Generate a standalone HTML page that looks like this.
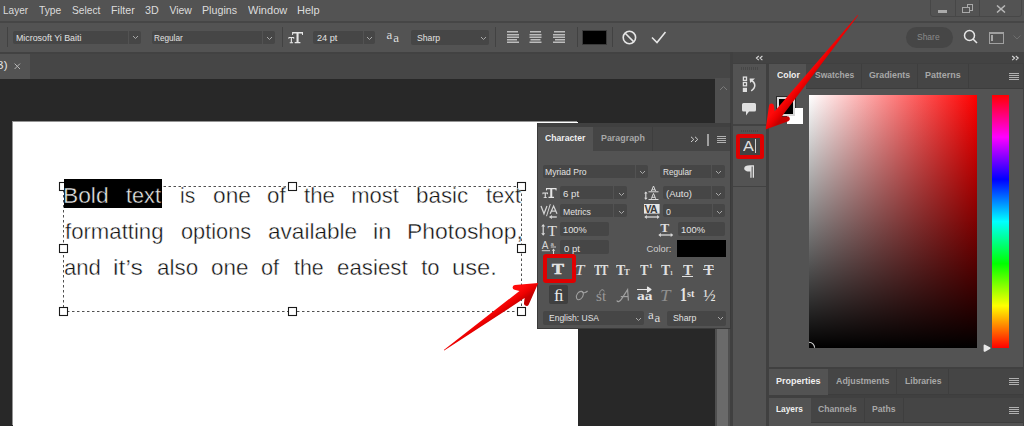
<!DOCTYPE html>
<html><head><meta charset="utf-8">
<style>
*{margin:0;padding:0;box-sizing:border-box}
html,body{width:1024px;height:426px;overflow:hidden;background:#282828;font-family:"Liberation Sans",sans-serif}
.a{position:absolute}
.t{position:absolute;line-height:1;white-space:nowrap}
.menu{font-size:10.4px;color:#dcdcdc}
.fld{position:absolute;background:#464646;border-radius:2px}
.fld .sep{position:absolute;top:0;bottom:0;width:1px;background:#525252}
.ft{position:absolute;line-height:1;white-space:nowrap;font-size:9.3px;color:#e2e2e2}
.chev{position:absolute}
.tab{position:absolute;font-weight:bold;font-size:8.7px;line-height:1;white-space:nowrap}
.cw{font-size:22px;-webkit-text-stroke:0.4px #fff;paint-order:normal}
.cwb{-webkit-text-stroke:0.4px #000}
.ic{position:absolute;line-height:1;white-space:nowrap;font-family:"Liberation Serif",serif;color:#e0e0e0}
.hb{position:absolute;width:10px;height:7px;background:repeating-linear-gradient(#b0b0b0 0 1px,transparent 1px 2px)}
</style></head><body>

<!-- menu bar -->
<div class="a" style="left:0;top:0;width:1024px;height:21px;background:#535353"></div>
<div class="a" style="left:0;top:21px;width:1024px;height:2px;background:#464646"></div>

<span class="t menu" style="left:2.97px;top:6.40px;transform:scaleX(0.964);transform-origin:0 0">Layer</span>
<span class="t menu" style="left:39.24px;top:6.40px;transform:scaleX(0.983);transform-origin:0 0">Type</span>
<span class="t menu" style="left:72.18px;top:6.40px;transform:scaleX(0.982);transform-origin:0 0">Select</span>
<span class="t menu" style="left:110.66px;top:6.40px;transform:scaleX(1.029);transform-origin:0 0">Filter</span>
<span class="t menu" style="left:144.66px;top:6.40px;transform:scaleX(1.031);transform-origin:0 0">3D</span>
<span class="t menu" style="left:169.40px;top:6.40px">View</span>
<span class="t menu" style="left:202.16px;top:6.40px;transform:scaleX(1.028);transform-origin:0 0">Plugins</span>
<span class="t menu" style="left:247.50px;top:6.40px;transform:scaleX(1.062);transform-origin:0 0">Window</span>
<span class="t menu" style="left:297.14px;top:6.40px;transform:scaleX(1.062);transform-origin:0 0">Help</span>

<!-- window controls -->
<div class="a" style="left:930px;top:-2px;width:92px;height:19px;border:1px solid #474747;border-radius:0 0 3px 3px"></div>
<div class="a" style="left:955px;top:0;width:1px;height:16px;background:#474747"></div>
<div class="a" style="left:979px;top:0;width:1px;height:16px;background:#474747"></div>
<div class="a" style="left:938px;top:9.5px;width:9px;height:3px;background:#ababab"></div>
<div class="a" style="left:966.5px;top:4px;width:6.5px;height:6.5px;border:1.6px solid #a8a8a8"></div>
<div class="a" style="left:962px;top:7px;width:7.5px;height:6px;border:1.6px solid #a8a8a8;background:#535353"></div>
<svg class="a" style="left:996px;top:5px" width="10" height="8"><path d="M1 0.5L9 7.5M9 0.5L1 7.5" stroke="#b8b8b8" stroke-width="1.5"/></svg>

<!-- options bar -->
<div class="a" style="left:0;top:23px;width:1024px;height:29px;background:#535353"></div>
<div class="a" style="left:0;top:52px;width:1024px;height:2px;background:#424242"></div>
<div class="a" style="left:7px;top:27px;width:1px;height:20px;background:#424242"></div>

<div class="fld" style="left:13px;top:31px;width:128px;height:13px"><div class="sep" style="left:115px"></div></div>
<span class="ft" style="left:16.31px;top:34.00px;transform:scaleX(0.951);transform-origin:0 0">Microsoft Yi Baiti</span>
<svg class="chev" style="left:131.50px;top:35.00px" width="7" height="5"><path d="M1 1L3.5 3.5L6 1" fill="none" stroke="#a8a8a8" stroke-width="1"/></svg>

<div class="fld" style="left:152px;top:31px;width:123px;height:13px"><div class="sep" style="left:110px"></div></div>
<span class="ft" style="left:153.76px;top:33.60px;transform:scaleX(0.881);transform-origin:0 0">Regular</span>
<svg class="chev" style="left:266.25px;top:35.90px" width="7" height="5"><path d="M1 1L3.5 3.5L6 1" fill="none" stroke="#a8a8a8" stroke-width="1"/></svg>

<div class="a" style="left:282px;top:27px;width:1px;height:20px;background:#424242"></div>
<svg class="a" style="left:288px;top:31px" width="16" height="13"><g fill="#e6e6e6">
<path d="M0.5 6.1H6.2V8H5.6L5.3 7.1H3.9V11.3H5V12.3H1.7V11.3H2.8V7.1H1.4L1.1 8H0.5Z"/>
<path d="M4.1 1H15V3.9H14.2L13.8 2.5H10.6V10.9H12.4V12.3H6.7V10.9H8.5V2.5H5.3L4.9 3.9H4.1Z"/>
</g></svg>

<div class="fld" style="left:313px;top:31px;width:62px;height:13px"><div class="sep" style="left:50px"></div></div>
<span class="ft" style="left:316.57px;top:33.60px;transform:scaleX(0.986);transform-origin:0 0">24 pt</span>
<svg class="chev" style="left:365.90px;top:36.00px" width="7" height="5"><path d="M1 1L3.5 3.5L6 1" fill="none" stroke="#a8a8a8" stroke-width="1"/></svg>

<svg class="a" style="left:382px;top:28px" width="22" height="18"><text x="4.6" y="11.4" font-family="Liberation Serif" font-size="13" fill="#dcdcdc" transform="scale(1,1)">a</text><text x="11.2" y="13.9" font-family="Liberation Serif" font-size="13" fill="#dcdcdc">a</text></svg>

<div class="fld" style="left:411px;top:30px;width:78px;height:15px"></div>
<span class="ft" style="left:417.23px;top:34.00px;transform:scaleX(0.932);transform-origin:0 0">Sharp</span>
<svg class="chev" style="left:480.25px;top:36.00px" width="7" height="5"><path d="M1 1L3.5 3.5L6 1" fill="none" stroke="#a8a8a8" stroke-width="1"/></svg>

<div class="a" style="left:495px;top:27px;width:1px;height:20px;background:#424242"></div>
<svg class="a" style="left:506px;top:30px" width="62" height="15">
 <g fill="#bdbdbd">
 <rect x="1" y="1" width="11" height="1.5"/><rect x="1" y="4" width="12" height="1.5"/><rect x="1" y="6.5" width="12" height="1.5"/><rect x="1" y="9" width="10" height="1.5"/><rect x="1" y="11.5" width="12" height="1.5"/>
 <rect x="24" y="1" width="11" height="1.5"/><rect x="23.5" y="4" width="12" height="1.5"/><rect x="23.5" y="6.5" width="12" height="1.5"/><rect x="24.5" y="9" width="10" height="1.5"/><rect x="23.5" y="11.5" width="12" height="1.5"/>
 <rect x="48" y="1" width="11" height="1.5"/><rect x="47" y="4" width="12" height="1.5"/><rect x="47" y="6.5" width="12" height="1.5"/><rect x="49" y="9" width="10" height="1.5"/><rect x="47" y="11.5" width="12" height="1.5"/>
 </g>
</svg>
<div class="a" style="left:577px;top:27px;width:1px;height:20px;background:#424242"></div>
<div class="a" style="left:582px;top:30px;width:25px;height:15px;background:#000;border:1px solid #3a3a3a"></div>
<div class="a" style="left:612px;top:27px;width:1px;height:20px;background:#424242"></div>
<svg class="a" style="left:621px;top:29px" width="17" height="17"><circle cx="8.4" cy="8.5" r="6.2" fill="none" stroke="#e6e6e6" stroke-width="1.6"/><path d="M4.2 4.2L12.6 12.6" stroke="#e6e6e6" stroke-width="1.6"/></svg>
<svg class="a" style="left:650px;top:30px" width="18" height="15"><path d="M2 7.5L7 12.5L15.5 2" fill="none" stroke="#e6e6e6" stroke-width="1.6"/></svg>

<div class="a" style="left:906px;top:27px;width:47px;height:21px;background:#464646;border-radius:11px"></div>
<span class="t" style="left:917.24px;top:33.25px;transform:scaleX(0.911);transform-origin:0 0;font-size:9.3px;color:#8a8a8a">Share</span>
<svg class="a" style="left:962px;top:28px" width="17" height="17"><circle cx="7.5" cy="7.5" r="5" fill="none" stroke="#e6e6e6" stroke-width="1.5"/><path d="M11 11L15 15" stroke="#e6e6e6" stroke-width="1.6"/></svg>
<div class="a" style="left:989px;top:32px;width:15px;height:12px;border:1.4px solid #a0a0a0;border-top-width:2px"></div>
<div class="a" style="left:991px;top:35px;width:2px;height:6px;background:#a8a8a8"></div>
<svg class="a" style="left:1013px;top:35px" width="8" height="5"><path d="M0.5 0.5L4 4L7.5 0.5" fill="none" stroke="#6e6e6e" stroke-width="1"/></svg>

<!-- tab bar -->
<div class="a" style="left:0;top:54px;width:730px;height:25px;background:#464646"></div>
<div class="a" style="left:0;top:54px;width:30px;height:25px;background:#535353"></div>
<span class="t" style="left:-3.90px;top:60.90px;transform:scaleX(1.105);transform-origin:0 0;font-size:10.4px;color:#e6e6e6">B)</span>
<svg class="a" style="left:14.2px;top:62.8px" width="7" height="7"><path d="M0.6 0.6L6 6M6 0.6L0.6 6" stroke="#b8b8b8" stroke-width="1"/></svg>

<!-- canvas -->
<div class="a" style="left:13px;top:122px;width:565px;height:304px;background:#fff;box-shadow:-1px -1px 0 0 rgba(255,255,255,0.5)"></div>

<!-- box + arrows -->
<svg class="a" style="left:0;top:0" width="1024" height="426">
<rect x="63.5" y="186.5" width="458" height="125" fill="none" stroke="#505050" stroke-width="1" stroke-dasharray="2.5 2.5"/>
<rect x="59.5" y="182.5" width="8" height="8" fill="#fff" stroke="#1a1a1a" stroke-width="1.1"/>
<rect x="288.5" y="182.5" width="8" height="8" fill="#fff" stroke="#1a1a1a" stroke-width="1.1"/>
<rect x="517.5" y="182.5" width="8" height="8" fill="#fff" stroke="#1a1a1a" stroke-width="1.1"/>
<rect x="59.5" y="244.5" width="8" height="8" fill="#fff" stroke="#1a1a1a" stroke-width="1.1"/>
<rect x="517.5" y="244.5" width="8" height="8" fill="#fff" stroke="#1a1a1a" stroke-width="1.1"/>
<rect x="59.5" y="307.5" width="8" height="8" fill="#fff" stroke="#1a1a1a" stroke-width="1.1"/>
<rect x="288.5" y="307.5" width="8" height="8" fill="#fff" stroke="#1a1a1a" stroke-width="1.1"/>
<rect x="517.5" y="307.5" width="8" height="8" fill="#fff" stroke="#1a1a1a" stroke-width="1.1"/>
</svg>
<!-- canvas text -->
<div class="a" style="left:64px;top:179px;width:98px;height:29px;background:#000"></div>
<span class="t cw cwb" style="left:63.22px;top:184.95px;transform:scaleX(1.035);transform-origin:0 0;color:#e8e8e8">Bold</span>
<span class="t cw cwb" style="left:126.00px;top:184.95px;transform:scaleX(0.985);transform-origin:0 0;color:#e8e8e8">text</span>
<span class="t cw" style="left:180.43px;top:184.95px;transform:scaleX(0.958);transform-origin:0 0;color:#111">is</span>
<span class="t cw" style="left:213.04px;top:184.95px;transform:scaleX(1.032);transform-origin:0 0;color:#111">one</span>
<span class="t cw" style="left:267.30px;top:184.95px;transform:scaleX(1.015);transform-origin:0 0;color:#111">of</span>
<span class="t cw" style="left:303.75px;top:184.95px;transform:scaleX(1.010);transform-origin:0 0;color:#111">the</span>
<span class="t cw" style="left:351.13px;top:184.95px;color:#111">most</span>
<span class="t cw" style="left:416.10px;top:184.95px;transform:scaleX(1.017);transform-origin:0 0;color:#111">basic</span>
<span class="t cw" style="left:486.25px;top:184.95px;transform:scaleX(0.985);transform-origin:0 0;color:#111">text</span>
<span class="t cw" style="left:64.75px;top:220.70px;transform:scaleX(1.007);transform-origin:0 0;color:#111">formatting</span>
<span class="t cw" style="left:180.57px;top:220.70px;transform:scaleX(0.988);transform-origin:0 0;color:#111">options</span>
<span class="t cw" style="left:268.04px;top:220.70px;transform:scaleX(1.026);transform-origin:0 0;color:#111">available</span>
<span class="t cw" style="left:373.03px;top:220.70px;transform:scaleX(1.068);transform-origin:0 0;color:#111">in</span>
<span class="t cw" style="left:406.96px;top:220.70px;transform:scaleX(1.042);transform-origin:0 0;color:#111">Photoshop,</span>
<span class="t cw" style="left:64.31px;top:257.45px;transform:scaleX(1.006);transform-origin:0 0;color:#111">and</span>
<span class="t cw" style="left:113.45px;top:257.45px;transform:scaleX(1.126);transform-origin:0 0;color:#111">it’s</span>
<span class="t cw" style="left:156.80px;top:257.45px;transform:scaleX(1.019);transform-origin:0 0;color:#111">also</span>
<span class="t cw" style="left:210.55px;top:257.45px;transform:scaleX(1.018);transform-origin:0 0;color:#111">one</span>
<span class="t cw" style="left:261.32px;top:257.45px;transform:scaleX(0.987);transform-origin:0 0;color:#111">of</span>
<span class="t cw" style="left:293.75px;top:257.45px;transform:scaleX(0.968);transform-origin:0 0;color:#111">the</span>
<span class="t cw" style="left:336.80px;top:257.45px;transform:scaleX(1.013);transform-origin:0 0;color:#111">easiest</span>
<span class="t cw" style="left:421.25px;top:257.45px;color:#111">to</span>
<span class="t cw" style="left:452.27px;top:257.45px;transform:scaleX(1.079);transform-origin:0 0;color:#111">use.</span>
<!-- scrollbar -->
<div class="a" style="left:715px;top:78px;width:15px;height:348px;background:#4f4f4f"></div>
<svg class="a" style="left:719px;top:85px" width="9" height="6"><path d="M1 5L4.5 1.5L8 5" fill="none" stroke="#7a7a7a" stroke-width="1"/></svg>
<div class="a" style="left:717px;top:300px;width:11px;height:126px;background:#6a6a6a"></div>

<!-- dock -->
<div class="a" style="left:730px;top:52px;width:294px;height:374px;background:#404040"></div>
<div class="a" style="left:733px;top:52px;width:291px;height:11px;background:#434343"></div>
<svg class="a" style="left:754.5px;top:55px" width="9" height="6"><path d="M3.8 1L1.4 3.1L3.8 5.2M7.4 1L5 3.1L7.4 5.2" fill="none" stroke="#d8d8d8" stroke-width="1.1"/></svg>
<svg class="a" style="left:1011px;top:55px" width="9" height="6"><path d="M1.2 1L3.6 3.1L1.2 5.2M4.8 1L7.2 3.1L4.8 5.2" fill="none" stroke="#d8d8d8" stroke-width="1.1"/></svg>

<!-- icon column -->
<div class="a" style="left:733px;top:64px;width:33px;height:362px;background:#535353"></div>
<div class="a" style="left:733px;top:124px;width:33px;height:2px;background:#424242"></div>
<div class="a" style="left:733px;top:186px;width:33px;height:1px;background:#424242"></div>
<div class="a" style="left:741px;top:67px;width:17px;height:3px;background:repeating-linear-gradient(90deg,#474747 0 1px,transparent 1px 2px)"></div>
<div class="a" style="left:741px;top:130px;width:17px;height:2px;background:repeating-linear-gradient(90deg,#474747 0 1px,transparent 1px 2px)"></div>
<svg class="a" style="left:741px;top:75px" width="17" height="18">
 <rect x="2.4" y="2.1" width="3.1" height="3.3" fill="none" stroke="#e0e0e0" stroke-width="1.3"/>
 <rect x="2.4" y="7.5" width="3.1" height="3.3" fill="none" stroke="#e0e0e0" stroke-width="1.3"/>
 <rect x="1.8" y="12.8" width="4.2" height="4.2" fill="#e0e0e0"/>
 <path d="M10 5.2C14.6 7.2 15.4 12.4 10.2 15.8" fill="none" stroke="#e0e0e0" stroke-width="1.5"/>
 <path d="M8.6 3.4L14 3.5L9.1 8Z" fill="#e0e0e0"/>
</svg>
<svg class="a" style="left:741px;top:102px" width="16" height="15"><path d="M2.5 1H13.5Q15 1 15 2.5V8Q15 9.5 13.5 9.5H8L5 13.5V9.5H2.5Q1 9.5 1 8V2.5Q1 1 2.5 1Z" fill="#e0e0e0"/></svg>

<!-- red box A| -->
<div class="a" style="left:735.5px;top:134px;width:28.5px;height:25px;border:4px solid #e00000;border-radius:2.5px;background:#424242"></div>
<span class="t" style="left:742.80px;top:139.10px;transform:scaleX(1.096);transform-origin:0 0;font-size:14.8px;color:#e0e0e0">A</span>
<div class="a" style="left:754.8px;top:138.5px;width:1px;height:14.5px;background:#d0d0d0"></div>
<svg class="a" style="left:744px;top:165px" width="11" height="14"><path d="M6 0.3H10V12.8H8.7V1.5H7.6V12.8H6.3V6.6C2.5 6.6 0.2 5.3 0.2 3.4C0.2 1.5 2.5 0.3 6 0.3Z" fill="#e0e0e0"/></svg>

<!-- color panel -->
<div class="a" style="left:769px;top:64px;width:254px;height:303px;background:#535353"></div>
<div class="a" style="left:806px;top:64px;width:217px;height:25px;background:#454545;border-bottom:1px solid #3d3d3d"></div>
<div class="a" style="left:861px;top:64px;width:1px;height:24px;background:#3e3e3e"></div>
<div class="a" style="left:917px;top:64px;width:1px;height:24px;background:#3e3e3e"></div>
<div class="a" style="left:968px;top:64px;width:1px;height:24px;background:#3e3e3e"></div>
<span class="tab" style="left:776.63px;top:70.75px;transform:scaleX(1.008);transform-origin:0 0;color:#f0f0f0">Color</span>
<span class="tab" style="left:814.62px;top:70.75px;transform:scaleX(0.977);transform-origin:0 0;color:#a8a8a8">Swatches</span>
<span class="tab" style="left:869.12px;top:70.75px;transform:scaleX(1.015);transform-origin:0 0;color:#a8a8a8">Gradients</span>
<span class="tab" style="left:925.44px;top:70.75px;transform:scaleX(1.025);transform-origin:0 0;color:#a8a8a8">Patterns</span>
<div class="hb" style="left:1009px;top:73px"></div>

<div class="a" style="left:809px;top:95px;width:168px;height:253px;background:linear-gradient(to bottom,rgba(0,0,0,0),#000),linear-gradient(to right,#fff,#f00)"></div>
<div class="a" style="left:992px;top:95px;width:17px;height:253px;background:linear-gradient(to bottom,#f00 0%,#f0f 16.67%,#00f 33.33%,#0ff 50%,#0f0 66.67%,#ff0 83.33%,#f00 100%)"></div>
<svg class="a" style="left:803px;top:341px" width="13" height="8"><path d="M6 1.2A5.6 5.6 0 0 1 11.6 6.8" fill="none" stroke="#d0d0d0" stroke-width="1.1"/></svg>
<svg class="a" style="left:983px;top:344px" width="9" height="8"><path d="M1.6 1.6L6.4 4.2L1.6 6.8Z" fill="#e8e8e8" stroke="#e8e8e8" stroke-linejoin="round" stroke-width="2"/></svg>
<div class="a" style="left:777px;top:97px;width:18px;height:19px;border:1px solid #eaeaea;outline:1px solid #2a2a2a;background:#000"></div>
<div class="a" style="left:787px;top:108px;width:16px;height:16px;background:#fff"></div>
<div class="a" style="left:777px;top:97px;width:18px;height:19px;border:2px solid #d8d8d8;background:#000"></div>

<!-- properties -->
<div class="a" style="left:769px;top:369px;width:254px;height:26px;background:#454545;border-bottom:1px solid #3d3d3d"></div>
<div class="a" style="left:769px;top:369px;width:59px;height:26px;background:#535353"></div>
<div class="a" style="left:896px;top:369px;width:1px;height:26px;background:#3e3e3e"></div>
<div class="a" style="left:948px;top:369px;width:1px;height:26px;background:#3e3e3e"></div>
<span class="tab" style="left:776.44px;top:376.75px;transform:scaleX(1.035);transform-origin:0 0;color:#f0f0f0">Properties</span>
<span class="tab" style="left:836.11px;top:376.50px;transform:scaleX(1.017);transform-origin:0 0;color:#a8a8a8">Adjustments</span>
<span class="tab" style="left:905.06px;top:376.50px;transform:scaleX(0.994);transform-origin:0 0;color:#a8a8a8">Libraries</span>
<div class="hb" style="left:1009px;top:378px"></div>

<!-- layers -->
<div class="a" style="left:769px;top:398px;width:254px;height:25px;background:#454545;border-bottom:1px solid #3d3d3d"></div>
<div class="a" style="left:769px;top:398px;width:42px;height:28px;background:#535353"></div>
<div class="a" style="left:864px;top:398px;width:1px;height:24px;background:#3e3e3e"></div>
<div class="a" style="left:903px;top:398px;width:1px;height:24px;background:#3e3e3e"></div>
<div class="a" style="left:769px;top:423px;width:254px;height:3px;background:#535353"></div>
<span class="tab" style="left:776.48px;top:405.00px;transform:scaleX(0.957);transform-origin:0 0;color:#f0f0f0">Layers</span>
<span class="tab" style="left:818.48px;top:405.00px;transform:scaleX(0.990);transform-origin:0 0;color:#a8a8a8">Channels</span>
<span class="tab" style="left:872.46px;top:404.90px;transform:scaleX(0.991);transform-origin:0 0;color:#a8a8a8">Paths</span>
<div class="hb" style="left:1009px;top:407px"></div>


<!-- character panel -->
<div class="a" style="left:537px;top:122.5px;width:194px;height:206.5px;background:#3a3a3a"></div>
<div class="a" style="left:538px;top:127px;width:192px;height:24px;background:#454545"></div>
<div class="a" style="left:538px;top:123px;width:192px;height:4px;background:#404040"></div>
<div class="a" style="left:538px;top:127px;width:55px;height:24px;background:#535353"></div>
<div class="a" style="left:652px;top:127px;width:1px;height:24px;background:#3e3e3e"></div>
<span class="tab" style="left:545.33px;top:133.60px;transform:scaleX(0.994);transform-origin:0 0;color:#f0f0f0">Character</span>
<span class="tab" style="left:601.44px;top:133.60px;transform:scaleX(1.022);transform-origin:0 0;color:#a8a8a8">Paragraph</span>
<svg class="a" style="left:689.5px;top:135.5px" width="11" height="8"><path d="M1 0.8L3.8 3.4L1 6M5 0.8L7.8 3.4L5 6" fill="none" stroke="#d0d0d0" stroke-width="1"/></svg>
<div class="a" style="left:707px;top:134px;width:1.5px;height:12px;background:#a0a0a0"></div>
<div class="hb" style="left:717px;top:136px;width:9px"></div>
<div class="a" style="left:538px;top:151px;width:192px;height:177px;background:#535353"></div>

<div class="fld" style="left:543px;top:165px;width:105px;height:13px"><div class="sep" style="left:92px"></div></div>
<span class="ft" style="left:544.93px;top:167.75px;transform:scaleX(0.926);transform-origin:0 0">Myriad Pro</span>
<svg class="chev" style="left:639.00px;top:170.00px" width="7" height="5"><path d="M1 1L3.5 3.5L6 1" fill="none" stroke="#a8a8a8" stroke-width="1"/></svg>
<div class="fld" style="left:660px;top:165px;width:65px;height:13px"><div class="sep" style="left:51px"></div></div>
<span class="ft" style="left:663.11px;top:167.75px;transform:scaleX(0.881);transform-origin:0 0">Regular</span>
<svg class="chev" style="left:715.25px;top:170.00px" width="7" height="5"><path d="M1 1L3.5 3.5L6 1" fill="none" stroke="#a8a8a8" stroke-width="1"/></svg>

<svg class="a" style="left:541.5px;top:187px" width="16" height="13"><g transform="scale(0.97,0.9)"><g fill="#e6e6e6"><path d="M0.5 6.1H6.2V8H5.6L5.3 7.1H3.9V11.3H5V12.3H1.7V11.3H2.8V7.1H1.4L1.1 8H0.5Z"/><path d="M4.1 1H15V3.9H14.2L13.8 2.5H10.6V10.9H12.4V12.3H6.7V10.9H8.5V2.5H5.3L4.9 3.9H4.1Z"/></g></g></svg>
<div class="fld" style="left:560px;top:186px;width:67px;height:13px"><div class="sep" style="left:53px"></div></div>
<span class="ft" style="left:562.55px;top:189.90px;transform:scaleX(1.042);transform-origin:0 0">6 pt</span>
<svg class="chev" style="left:617.50px;top:191.50px" width="7" height="5"><path d="M1 1L3.5 3.5L6 1" fill="none" stroke="#a8a8a8" stroke-width="1"/></svg>

<svg class="a" style="left:644px;top:185px" width="16" height="16"><g fill="none" stroke="#d8d8d8" stroke-width="1"><path d="M9.5 1L7.3 6.2M9.5 1L11.7 6.2M8 4.8H11M4.5 6.8H14.5"/><path d="M9.5 8.4L7.3 13.8M9.5 8.4L11.7 13.8M8 12.3H11M4.5 14.5H14.5"/></g><path d="M1.8 7.2V14.2" stroke="#d8d8d8" stroke-width="1.2"/><path d="M0 8.6L1.8 6.6L3.6 8.6ZM0 12.8L1.8 14.8L3.6 12.8Z" fill="#d8d8d8"/></svg>
<div class="fld" style="left:663px;top:186px;width:62px;height:13px"><div class="sep" style="left:48px"></div></div>
<span class="ft" style="left:665.80px;top:189.50px;transform:scaleX(1.024);transform-origin:0 0">(Auto)</span>
<svg class="chev" style="left:715.25px;top:191.50px" width="7" height="5"><path d="M1 1L3.5 3.5L6 1" fill="none" stroke="#a8a8a8" stroke-width="1"/></svg>

<svg class="a" style="left:538px;top:202px" width="22" height="18"><g fill="none" stroke="#d4d4d4" stroke-width="1.25"><path d="M3 4L6 11.7L9 4M12.2 11.7L15.6 4L19 11.7M13.3 9.2H17.9"/></g><path d="M12.3 2.2L8.5 14.2" stroke="#d4d4d4" stroke-width="1"/><path d="M13.5 15H18.8" stroke="#d4d4d4" stroke-width="1.4"/><path d="M10.8 15L13.9 13V17Z" fill="#d4d4d4"/></svg>
<div class="fld" style="left:560px;top:204px;width:67px;height:13px"><div class="sep" style="left:53px"></div></div>
<span class="ft" style="left:562.82px;top:207.75px;transform:scaleX(0.933);transform-origin:0 0">Metrics</span>
<svg class="chev" style="left:617.50px;top:209.75px" width="7" height="5"><path d="M1 1L3.5 3.5L6 1" fill="none" stroke="#a8a8a8" stroke-width="1"/></svg>

<svg class="a" style="left:643px;top:203px" width="18" height="17"><rect x="1" y="1" width="15.6" height="9.6" fill="#e6e6e6"/><text x="1.6" y="9.8" font-family="Liberation Sans" font-weight="bold" font-size="10.5" fill="#3a3a3a" letter-spacing="-0.9">VA</text><path d="M3 14H15" stroke="#d8d8d8" stroke-width="1.3"/><path d="M1.3 14L3.8 12V16ZM16.6 14L14.1 12V16Z" fill="#d8d8d8"/></svg>
<div class="fld" style="left:663px;top:204px;width:62px;height:13px"><div class="sep" style="left:49px"></div></div>
<span class="ft" style="left:665.98px;top:207.75px;transform:scaleX(0.946);transform-origin:0 0">0</span>
<svg class="chev" style="left:715.50px;top:209.75px" width="7" height="5"><path d="M1 1L3.5 3.5L6 1" fill="none" stroke="#a8a8a8" stroke-width="1"/></svg>

<svg class="a" style="left:540px;top:222px" width="18" height="16"><text x="7.6" y="13.8" font-family="Liberation Serif" font-size="15.5" fill="#e0e0e0" transform="translate(0,0)">T</text><path d="M3.2 3.5V12.2" stroke="#d8d8d8" stroke-width="1.2"/><path d="M1.2 4.4L3.2 1.9L5.2 4.4ZM1.2 11.3L3.2 13.8L5.2 11.3Z" fill="#d8d8d8"/></svg>
<div class="fld" style="left:560px;top:222px;width:49px;height:14px"></div>
<span class="ft" style="left:562.92px;top:225.75px;transform:scaleX(0.992);transform-origin:0 0">100%</span>

<svg class="a" style="left:657px;top:222px" width="18" height="16"><text x="3.2" y="10.4" font-family="Liberation Serif" font-weight="bold" font-size="13.5" fill="#e0e0e0">T</text><path d="M3.5 13H14" stroke="#d8d8d8" stroke-width="1.3"/><path d="M1.3 13L3.9 11V15ZM16.3 13L13.7 11V15Z" fill="#d8d8d8"/></svg>
<div class="fld" style="left:678px;top:222px;width:47px;height:14px"></div>
<span class="ft" style="left:680.66px;top:225.75px;transform:scaleX(1.008);transform-origin:0 0">100%</span>

<svg class="a" style="left:541px;top:240px" width="17" height="16"><text x="0.8" y="9.4" font-family="Liberation Sans" font-size="10" fill="#d8d8d8">A</text><text x="9.6" y="5.8" font-family="Liberation Sans" font-size="6" fill="#d8d8d8">a</text><path d="M0.8 10.7H9M9.8 7H15" fill="none" stroke="#d8d8d8" stroke-width="0.9"/><path d="M12.5 14.5V10.3" stroke="#d8d8d8" stroke-width="1.1"/><path d="M10.8 10.8L12.5 8.6L14.2 10.8Z" fill="#d8d8d8"/></svg>
<div class="fld" style="left:560px;top:240px;width:49px;height:14px"></div>
<span class="ft" style="left:564.10px;top:244.90px;transform:scaleX(1.023);transform-origin:0 0">0 pt</span>

<span class="ft" style="left:646.56px;top:244.90px;color:#cfcfcf">Color:</span>
<div class="a" style="left:677px;top:240px;width:49px;height:17px;background:#000"></div>

<!-- style buttons -->
<div class="a" style="left:543px;top:254px;width:33px;height:29px;border:4px solid #e00000;border-radius:3px;background:#505050"></div>
<span class="ic" style="left:552.42px;top:262.25px;transform:scaleX(1.264);transform-origin:0 0;font-size:14.2px;font-weight:bold;-webkit-text-stroke:0.5px #e8e8e8">T</span>
<span class="ic" style="left:574.69px;top:262.50px;transform:scaleX(1.165);transform-origin:0 0;font-size:14.5px;font-style:italic">T</span>
<span class="ic" style="left:593.62px;top:262.50px;transform:scaleX(0.807);transform-origin:0 0;font-size:14.5px;font-weight:bold;letter-spacing:-1.5px">TT</span>
<span class="ic" style="left:615.78px;top:262.50px;transform:scaleX(0.958);transform-origin:0 0;font-size:14.5px;font-weight:bold">T</span>
<span class="ic" style="left:624.06px;top:267.50px;transform:scaleX(0.971);transform-origin:0 0;font-size:9px;font-weight:bold">T</span>
<span class="ic" style="left:639.50px;top:262.70px;transform:scaleX(0.883);transform-origin:0 0;font-size:14.5px;font-weight:bold">T</span>
<span class="ic" style="left:648.74px;top:264.20px;transform:scaleX(1.309);transform-origin:0 0;font-size:5.5px;font-weight:bold">1</span>
<span class="ic" style="left:660.58px;top:262.70px;transform:scaleX(0.958);transform-origin:0 0;font-size:14.5px;font-weight:bold">T</span>
<span class="ic" style="left:670.04px;top:271.00px;transform:scaleX(1.067);transform-origin:0 0;font-size:5.5px;font-weight:bold">1</span>
<span class="ic" style="left:682.97px;top:262.70px;transform:scaleX(1.012);transform-origin:0 0;font-size:14.5px;font-weight:bold">T</span>
<div class="a" style="left:682px;top:276px;width:11px;height:1.2px;background:#e0e0e0"></div>
<span class="ic" style="left:703.58px;top:262.70px;transform:scaleX(0.990);transform-origin:0 0;font-size:14.5px;font-weight:bold">T</span>
<div class="a" style="left:703px;top:269px;width:10.5px;height:1.3px;background:#e0e0e0"></div>

<!-- ligature row -->
<div class="a" style="left:549px;top:285px;width:19px;height:19.4px;background:#3f3f3f;border-radius:2px"></div>
<span class="ic" style="left:553.53px;top:286.90px;transform:scaleX(1.019);transform-origin:0 0;font-size:17px;color:#eaeaea">&#64257;</span>
<svg class="a" style="left:574px;top:289px" width="16" height="13"><g fill="none" stroke="#a0a0a0" stroke-width="1.1"><path d="M2.6 9.2C1.6 5.6 4.8 1.9 7.6 2.4C10.3 2.9 9.8 7.6 6.8 9.9C4.6 11.5 3 10.8 2.6 9.2Z"/><path d="M7.8 2.6C9.4 4.4 11.6 4 13.6 2"/></g></svg>
<span class="ic" style="left:595.93px;top:288.50px;transform:scaleX(1.012);transform-origin:0 0;font-size:15px;color:#9a9a9a">st</span>
<svg class="a" style="left:596px;top:286px" width="12" height="10"><path d="M3.6 7.6C3.6 3.6 7.6 2.4 8.2 5.4" fill="none" stroke="#9a9a9a" stroke-width="1"/></svg>
<svg class="a" style="left:615px;top:288px" width="16" height="15"><g fill="none" stroke="#a0a0a0" stroke-width="1.15"><path d="M1.8 12.4C2.8 14.6 5 13.4 6.8 10.6L12.6 1.6L13.4 12.6"/><path d="M5.8 8.6H13"/></g></svg>
<span class="ic" style="left:636.52px;top:290.00px;transform:scaleX(1.290);transform-origin:0 0;font-size:12px;font-weight:bold;color:#e6e6e6">aa</span>
<svg class="a" style="left:636px;top:286px" width="17" height="7"><path d="M1 3.5H14.5M11.5 1L15 3.5L11.5 6Z" fill="#e6e6e6" stroke="#e6e6e6" stroke-width="1.1" stroke-linejoin="round"/></svg>
<span class="ic" style="left:660.42px;top:287.90px;transform:scaleX(1.142);transform-origin:0 0;font-size:16.5px;font-style:italic;color:#8e8e8e">T</span>
<span class="ic" style="left:679.92px;top:285.90px;transform:scaleX(0.770);transform-origin:0 0;font-size:18px;font-weight:bold;color:#e6e6e6">1</span>
<span class="ic" style="left:686.54px;top:289.50px;transform:scaleX(1.071);transform-origin:0 0;font-size:9.5px;font-weight:bold;color:#e6e6e6">st</span>
<span class="ic" style="left:703.28px;top:287.90px;font-size:16.5px;color:#e6e6e6">&#189;</span>

<div class="fld" style="left:543px;top:311px;width:101px;height:14px"></div>
<span class="ft" style="left:548.74px;top:314.00px;transform:scaleX(0.913);transform-origin:0 0">English: USA</span>
<svg class="chev" style="left:635.25px;top:316.50px" width="7" height="5"><path d="M1 1L3.5 3.5L6 1" fill="none" stroke="#a8a8a8" stroke-width="1"/></svg>
<svg class="a" style="left:644px;top:308px" width="22" height="18"><text x="4.1" y="10.8" font-family="Liberation Serif" font-size="13" fill="#dcdcdc">a</text><text x="10.6" y="13.9" font-family="Liberation Serif" font-size="13" fill="#dcdcdc">a</text></svg>
<div class="fld" style="left:667px;top:311px;width:59px;height:15px"></div>
<span class="ft" style="left:673.23px;top:314.25px;transform:scaleX(0.942);transform-origin:0 0">Sharp</span>
<svg class="chev" style="left:716.50px;top:316.25px" width="7" height="5"><path d="M1 1L3.5 3.5L6 1" fill="none" stroke="#a8a8a8" stroke-width="1"/></svg>

<svg class="a" style="left:0;top:0" width="1024" height="426">
<defs><linearGradient id="g1" gradientUnits="userSpaceOnUse" x1="761.3" y1="126.1" x2="769.9" y2="133.1"><stop offset="0" stop-color="#ff0a0a"/><stop offset="0.55" stop-color="#ec0000"/><stop offset="1" stop-color="#c40000"/></linearGradient><linearGradient id="g2" gradientUnits="userSpaceOnUse" x1="535.1" y1="278.4" x2="541.5" y2="287.4"><stop offset="0" stop-color="#ff0a0a"/><stop offset="0.55" stop-color="#ec0000"/><stop offset="1" stop-color="#c40000"/></linearGradient></defs>
<path d="M765.60 129.60 L769.00 105.72 A2.5 2.5 0 0 1 773.96 105.76 L774.66 111.21 L857.73 14.88 L858.27 15.32 L781.66 116.86 L787.14 116.39 A2.5 2.5 0 0 1 788.22 121.23 Z" fill="url(#g1)"/>
<path d="M538.30 282.90 L528.79 304.39 A2.5 2.5 0 0 1 524.02 303.09 L524.59 298.11 L444.20 350.58 L443.80 350.02 L519.47 290.95 L514.57 289.87 A2.5 2.5 0 0 1 514.89 284.94 Z" fill="url(#g2)"/>
</svg>
</body></html>
